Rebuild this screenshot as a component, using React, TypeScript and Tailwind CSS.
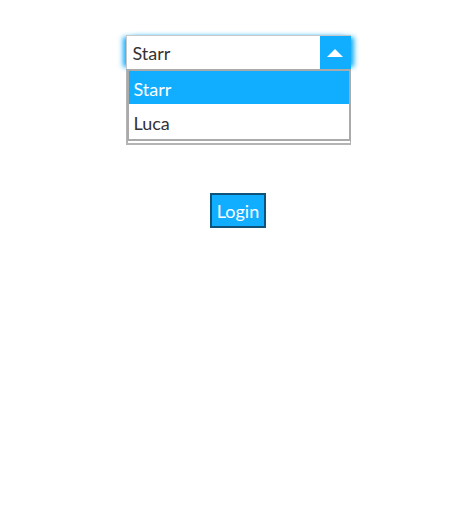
import React from "react";

export default function App() {
  return (
    <div className="min-h-[514px] w-full bg-white flex flex-col items-center pt-[35px] font-['Lato','Liberation_Sans',sans-serif] text-[18px] text-[#333]">
      <div className="relative w-[225px] h-[110px] border-l-2 border-r border-b-2 border-[#b4b4b4]">
        {/* select box */}
        <div className="absolute -left-[2px] -right-[1px] top-0 h-[34px] flex bg-white border-t border-l border-[#c8c8c8] shadow-[-5px_0_5px_-2px_#11aeff,5px_0_5px_-2px_#11aeff]">
          <div className="flex-1 flex items-center pl-[6px] pt-[1px] leading-none">Starr</div>
          <div className="w-[31px] h-full bg-[#11aeff] flex items-center justify-center">
            <svg width="16" height="8" viewBox="0 0 16 8">
              <polygon points="0,8 8,0 16,8" fill="#ffffff" />
            </svg>
          </div>
        </div>
        {/* dropdown list */}
        <div className="absolute left-[-1px] right-[-1px] top-[34px] h-[72px] bg-white border-2 border-[#aaaaaa] flex flex-col">
          <div className="h-[33px] bg-[#11aeff] text-white flex items-center pl-[5px] pt-[2px] leading-none">Starr</div>
          <div className="h-[35px] flex items-center pl-[5px] pt-[3px] leading-none">Luca</div>
        </div>
      </div>
      <button className="mt-[48px] h-[35px] px-[5px] bg-[#11aeff] border-2 border-[#0f5478] text-white text-[18px] leading-none">
        Login
      </button>
    </div>
  );
}
